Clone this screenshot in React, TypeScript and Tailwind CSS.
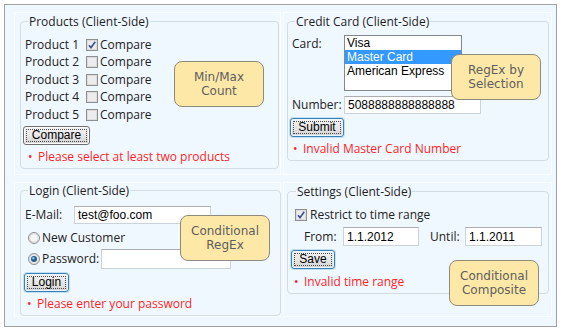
import type { ReactNode } from 'react';

// Windows-7-ish form controls drawn with plain elements
function Check({ checked = false }: { checked?: boolean }) {
  return (
    <svg width="12" height="12" viewBox="0 0 12 12" className="shrink-0">
      <rect x="0.5" y="0.5" width="11" height="11" fill="#f4f4f4" stroke="#8e8f8f" />
      <rect x="1.5" y="1.5" width="9" height="9" fill="#ececec" stroke="#dcdcdc" />
      {checked && (
        <path d="M3 6.2 L5 8.6 L9.2 2.8" fill="none" stroke="#3a4f8e" strokeWidth="1.6" />
      )}
    </svg>
  );
}

function Radio({ checked = false }: { checked?: boolean }) {
  return (
    <svg width="12" height="12" viewBox="0 0 12 12" className="shrink-0">
      <circle cx="6" cy="6" r="5.5" fill="#ececec" stroke="#8e8f8f" />
      <circle cx="6" cy="6" r="4.3" fill="#f6f6f6" stroke="#d4d4d4" />
      {checked && (
        <>
          <circle cx="6" cy="6" r="3" fill="#1d5d8c" />
          <circle cx="5.4" cy="5.2" r="1.2" fill="#7fc4ee" />
        </>
      )}
    </svg>
  );
}

function Btn({ children, className, blue = false }: { children: ReactNode; className: string; blue?: boolean }) {
  return (
    <div
      className={`flex h-[19px] items-center justify-center rounded-[3px] border bg-linear-to-b from-[#f2f2f2] via-[#e8e8e8] to-[#d2d2d2] p-[2px] font-['Liberation_Sans',Arial,sans-serif] text-[12px] text-black ${
        blue
          ? 'border-[#3c7fb1] shadow-[0_0_0_1px_#bfe0f5,inset_0_0_0_1px_#eaf6fd]'
          : 'border-[#707070] shadow-[inset_0_0_0_1px_#fbfbfb]'
      } ${className}`}
    >
      <span className="flex h-full w-full items-center justify-center border border-dotted border-[#4a4a4a] leading-[13px]">
        {children}
      </span>
    </div>
  );
}

function Input({ value = '', className }: { value?: string; className: string }) {
  return (
    <div
      className={`flex items-center border border-[#ccd2d9] border-t-[#abadb3] bg-white px-[3px] font-['Liberation_Sans',Arial,sans-serif] text-[12px] leading-[14px] text-black ${className}`}
    >
      {value}
    </div>
  );
}

function Err({ children, className }: { children: ReactNode; className: string }) {
  return (
    <div className={`flex h-[16px] items-center text-[12px] leading-[16px] text-[#ff1f1f] ${className}`}>
      <span className="w-[10px]">•</span>
      <span>{children}</span>
    </div>
  );
}

function Callout({ lines, className }: { lines: string[]; className: string }) {
  return (
    <div
      className={`absolute flex h-[46px] w-[90px] flex-col items-center justify-center rounded-[8px] border border-[#8d8a7e] bg-[#fde8a8] font-['DejaVu_Sans',Verdana,sans-serif] text-[12px] leading-[14px] text-[#5e5e5e] ${className}`}
    >
      {lines.map((l) => (
        <span key={l}>{l}</span>
      ))}
    </div>
  );
}

function Legend({ children, className }: { children: ReactNode; className: string }) {
  return (
    <span className={`absolute -top-[8px] bg-[#f0f8ff] px-[1px] leading-[16px] text-[#1e1e1e] ${className}`}>
      {children}
    </span>
  );
}

export default function App() {
  const cards = ['Visa', 'Master Card', 'American Express'];

  return (
    <div className="h-[331px] w-[562px] bg-white p-[4px] font-['Open_Sans',sans-serif] text-[12px] text-[#222]">
      <div className="h-[323px] w-[553px] border border-[#a0a0a0] bg-[#f0f8ff] pl-[9px] pt-[7px]">
        <div className="grid grid-cols-[267px_269px] grid-rows-[163px_135px] gap-x-[2px] gap-y-[7px]">
          {/* Products */}
          <div className="border border-[#fbfdff] pl-[5px] pt-[8px]">
            <div className="relative h-[148px] w-[259px] rounded-[4px] border border-[#d3dde4] pl-[4px] pt-[14px]">
              <Legend className="left-[7px]">Products (Client-Side)</Legend>
              {[1, 2, 3, 4, 5].map((n) => (
                <div key={n} className="flex h-[17.5px] items-center leading-[16px]">
                  <span className="w-[61px]">Product {n}</span>
                  <Check checked={n === 1} />
                  <span className="ml-[2px]">Compare</span>
                </div>
              ))}
              <Btn className="-ml-[2px] mt-[2.5px] w-[67px]">Compare</Btn>
              <Err className="ml-[3px] mt-[4px]">Please select at least two products</Err>
              <Callout lines={['Min/Max', 'Count']} className="left-[153px] top-[39px]" />
            </div>
          </div>

          {/* Credit card */}
          <div className="border border-[#fbfdff] pl-[3px] pt-[8px]">
            <div className="relative h-[140px] w-[262px] rounded-[4px] border border-[#d3dde4] pl-[4px] pt-[13px]">
              <Legend className="left-[7px]">Credit Card (Client-Side)</Legend>
              <div className="flex items-start leading-[16px]">
                <span className="w-[52px] pt-[1px]">Card:</span>
                <div className="h-[56px] w-[118px] border border-[#828790] bg-white font-['Liberation_Sans',Arial,sans-serif] text-[12px] leading-[14px] text-black">
                  {cards.map((c, i) => (
                    <div key={c} className={`h-[14px] pl-[2px] ${i === 1 ? 'bg-[#3399ff] text-white' : ''}`}>
                      {c}
                    </div>
                  ))}
                </div>
              </div>
              <div className="mt-[5px] flex h-[18px] items-center leading-[16px]">
                <span className="w-[52px]">Number:</span>
                <Input value="5088888888888888" className="h-[18px] w-[137px]" />
              </div>
              <Btn blue className="-ml-[2px] mt-[4px] w-[54px]">Submit</Btn>
              <Err className="ml-[1px] mt-[4px]">Invalid Master Card Number</Err>
              <Callout lines={['RegEx by', 'Selection']} className="left-[163px] top-[32px]" />
            </div>
          </div>

          {/* Login */}
          <div className="border border-[#fbfdff] pl-[5px] pt-[7px]">
            <div className="relative h-[126px] w-[261px] rounded-[4px] border border-[#d3dde4] pl-[4px] pt-[15px]">
              <Legend className="left-[7px]">Login (Client-Side)</Legend>
              <div className="flex h-[18px] items-center leading-[16px]">
                <span className="w-[49px]">E-Mail:</span>
                <Input value="test@foo.com" className="h-[18px] w-[137px]" />
              </div>
              <div className="ml-[3px] mt-[5px] flex h-[18px] items-center leading-[16px]">
                <Radio />
                <span className="ml-[2px]">New Customer</span>
              </div>
              <div className="ml-[3px] mt-[2px] flex h-[20px] items-center leading-[16px]">
                <Radio checked />
                <span className="ml-[2px]">Password:</span>
                <Input className="ml-[2px] h-[20px] w-[130px]" />
              </div>
              <Btn blue className="-ml-[1px] mt-[4px] w-[45px]">Login</Btn>
              <Err className="ml-[2px] mt-[4px]">Please enter your password</Err>
              <Callout lines={['Conditional', 'RegEx']} className="left-[159px] top-[24px]" />
            </div>
          </div>

          {/* Settings */}
          <div className="border border-[#fbfdff] pl-[3px] pt-[8px]">
            <div className="relative h-[103px] w-[262px] rounded-[4px] border border-[#d3dde4] pl-[4px] pt-[15px]">
              <Legend className="left-[8px]">Settings (Client-Side)</Legend>
              <div className="ml-[3px] flex h-[16px] items-center leading-[16px]">
                <Check checked />
                <span className="ml-[3px]">Restrict to time range</span>
              </div>
              <div className="mt-[4px] flex h-[19px] items-center leading-[16px]">
                <span className="ml-[12px] w-[39px]">From:</span>
                <Input value="1.1.2012" className="h-[19px] w-[76px]" />
                <span className="ml-[11px] w-[35px]">Until:</span>
                <Input value="1.1.2011" className="h-[19px] w-[77px]" />
              </div>
              <Btn blue className="-ml-[1px] mt-[4px] w-[44px]">Save</Btn>
              <Err className="ml-[2px] mt-[5px]">Invalid time range</Err>
              <Callout lines={['Conditional', 'Composite']} className="left-[161px] top-[68px]" />
            </div>
          </div>
        </div>
      </div>
    </div>
  );
}
